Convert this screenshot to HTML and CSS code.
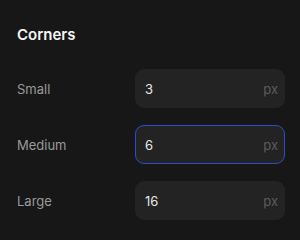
FILE: index.html
```html
<!DOCTYPE html>
<html lang="en">
<head>
    <meta charset="UTF-8">
    <title>Corners</title>
    <link rel="stylesheet" href="styles.css">
</head>
<body>
    <!-- Corner radius settings -->
    <div class="panel">
        <h2 class="panel-title">Corners</h2>

        <div class="rows">
            <div class="row">
                <span class="row-label">Small</span>
                <div class="field">
                    <span class="field-value">3</span>
                    <span class="field-unit">px</span>
                </div>
            </div>

            <div class="row">
                <span class="row-label">Medium</span>
                <div class="field field-active">
                    <span class="field-value">6</span>
                    <span class="field-unit">px</span>
                </div>
            </div>

            <div class="row">
                <span class="row-label">Large</span>
                <div class="field">
                    <span class="field-value">16</span>
                    <span class="field-unit">px</span>
                </div>
            </div>
        </div>
    </div>
</body>
</html>
```

FILE: styles.css
```css
/* Global */
body {
    margin: 0;
    padding: 0;
    background: #171717;
    font-family: Inter, 'Noto Sans', sans-serif;
}

/* Panel */
.panel {
    padding: 25px 15px 0 17px;
}

.panel-title {
    margin: 0 0 24px;
    font-size: 15px;
    line-height: 20px;
    font-weight: 600;
    color: #f4f4f4;
}

.rows {
    display: flex;
    flex-direction: column;
    gap: 17px;
}

.row {
    display: flex;
    justify-content: space-between;
    align-items: center;
}

.row-label {
    font-size: 13px;
    color: #9a9a9a;
}

/* Number field */
.field {
    box-sizing: border-box;
    width: 150px;
    height: 39px;
    padding: 0 6px 0 9px;
    display: flex;
    justify-content: space-between;
    align-items: center;
    background: #232323;
    border: 1px solid transparent;
    border-radius: 9px;
}

.field-active {
    border-color: #2c4fc4;
}

.field-value {
    font-size: 13px;
    color: #e8e8e8;
}

.field-unit {
    font-size: 13px;
    color: #5c5c5c;
}
```
